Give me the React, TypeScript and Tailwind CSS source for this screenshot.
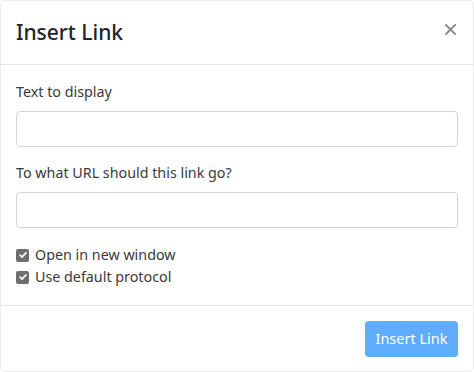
import { useState } from "react";

function CheckRow({ label, checked, onChange }: { label: string; checked: boolean; onChange: () => void }) {
  return (
    <label className="flex h-[22px] items-center gap-[6px] cursor-pointer">
      <span
        onClick={onChange}
        className={`flex h-[13px] w-[13px] items-center justify-center rounded-[2px] ${
          checked ? "bg-[#6e6e6e]" : "border border-[#767676] bg-white"
        }`}
      >
        {checked && (
          <svg viewBox="0 0 12 12" className="h-[10px] w-[10px]" fill="none">
            <path d="M2.5 6.2l2.3 2.3L9.6 3.5" stroke="white" strokeWidth="2" strokeLinecap="round" strokeLinejoin="round" />
          </svg>
        )}
      </span>
      <span className="text-[14.3px] text-[#3a3a3a]">{label}</span>
    </label>
  );
}

export default function App() {
  const [text, setText] = useState("");
  const [url, setUrl] = useState("");
  const [newWindow, setNewWindow] = useState(true);
  const [defaultProtocol, setDefaultProtocol] = useState(true);

  return (
    <div
      className="h-[372px] w-[474px] overflow-hidden bg-white"
      style={{ fontFamily: '"Segoe UI", "Noto Sans", sans-serif' }}
    >
      <div className="flex h-full flex-col rounded-[5px] border border-[#ececec] bg-white">
        <div className="flex h-[64px] items-center justify-between border-b border-[#e3e3e3] pl-[15px] pr-[17px]">
          <h5 className="text-[21px] font-medium text-[#212529]">Insert Link</h5>
          <button className="-mt-[6px] text-[#858585]" aria-label="Close">
            <svg viewBox="0 0 12 12" className="h-[11px] w-[11px]" fill="none">
              <path d="M1 1l10 10M11 1L1 11" stroke="currentColor" strokeWidth="2" strokeLinecap="round" />
            </svg>
          </button>
        </div>
        <div className="flex flex-col px-[15px] pt-[16px] pb-[17px] border-b border-[#e3e3e3]">
          <label className="h-[22px] text-[14.3px] leading-[22px] text-[#3a3a3a]">Text to display</label>
          <input
            value={text}
            onChange={(e) => setText(e.target.value)}
            className="mt-[8px] h-[36px] w-full rounded-[4px] border border-[#d4d4d4] px-3 text-[15px] outline-none"
          />
          <label className="mt-[15px] h-[22px] text-[14.3px] leading-[22px] text-[#3a3a3a]">
            To what URL should this link go?
          </label>
          <input
            value={url}
            onChange={(e) => setUrl(e.target.value)}
            className="mt-[8px] h-[36px] w-full rounded-[4px] border border-[#d4d4d4] px-3 text-[15px] outline-none"
          />
          <div className="mt-[16px] flex flex-col">
            <CheckRow label="Open in new window" checked={newWindow} onChange={() => setNewWindow(!newWindow)} />
            <CheckRow
              label="Use default protocol"
              checked={defaultProtocol}
              onChange={() => setDefaultProtocol(!defaultProtocol)}
            />
          </div>
        </div>
        <div className="flex flex-1 items-start justify-end px-[15px] pt-[15px]">
          <button className="h-[36px] w-[93px] rounded-[4px] bg-[#5eacfb] text-[14.5px] text-white">Insert Link</button>
        </div>
      </div>
    </div>
  );
}
